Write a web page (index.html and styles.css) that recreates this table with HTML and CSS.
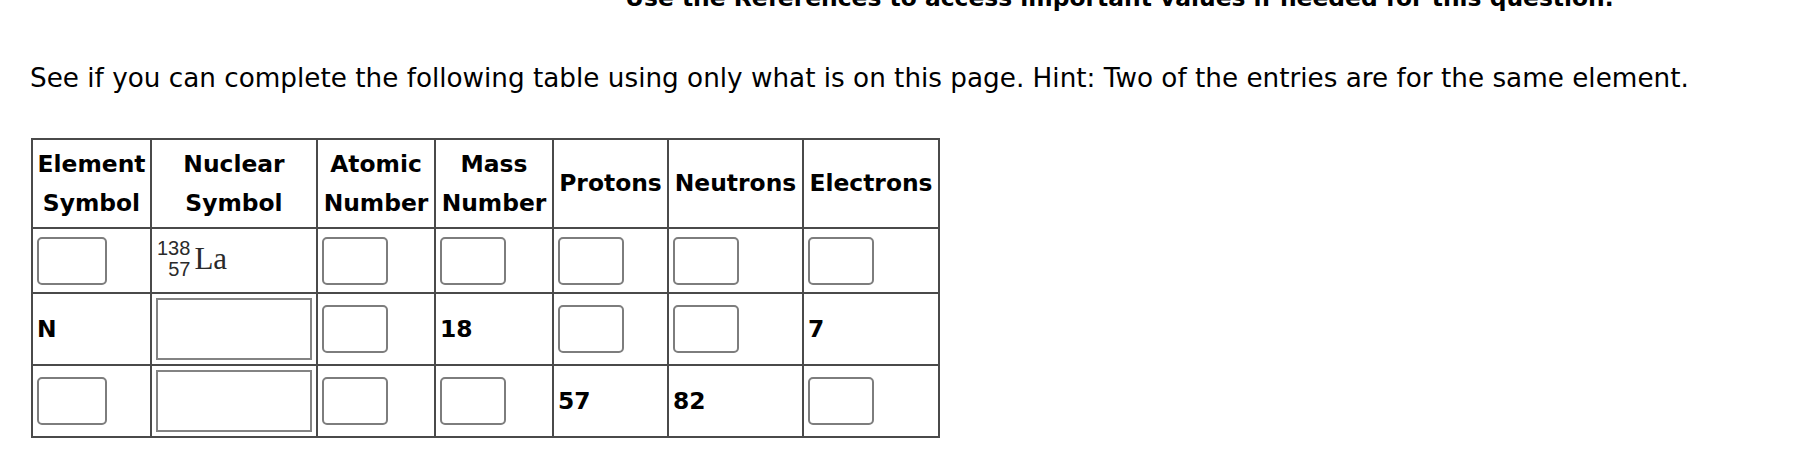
FILE: index.html
```html
<!DOCTYPE html>
<html lang="en">
<head>
<meta charset="utf-8">
<title>Complete the table</title>
<link rel="stylesheet" href="styles.css">
</head>
<body>
<div class="page">
  <p class="refs">Use the References to access important values if needed for this question.</p>
  <p class="intro">See if you can complete the following table using only what is on this page. Hint: Two of the entries are for the same element.</p>
  <table class="grid">
    <thead>
      <tr class="row-head">
        <th class="w1">Element<br>Symbol</th>
        <th class="w2">Nuclear<br>Symbol</th>
        <th class="w3">Atomic<br>Number</th>
        <th class="w4">Mass<br>Number</th>
        <th class="w5">Protons</th>
        <th class="w6">Neutrons</th>
        <th class="w7">Electrons</th>
      </tr>
    </thead>
    <tbody>
      <tr class="row-1">
        <td><input class="box box-wide" type="text"></td>
        <td class="nuc-cell">
          <span class="nuc">
            <span class="idx"><span>138</span><span>57</span></span>
            <span class="sym">La</span>
          </span>
        </td>
        <td><input class="box" type="text"></td>
        <td><input class="box" type="text"></td>
        <td><input class="box" type="text"></td>
        <td><input class="box" type="text"></td>
        <td><input class="box" type="text"></td>
      </tr>
      <tr class="row-2">
        <td class="val">N</td>
        <td><input class="nbox" type="text"></td>
        <td><input class="box" type="text"></td>
        <td class="val">18</td>
        <td><input class="box" type="text"></td>
        <td><input class="box" type="text"></td>
        <td class="val">7</td>
      </tr>
      <tr class="row-3">
        <td><input class="box box-wide" type="text"></td>
        <td><input class="nbox" type="text"></td>
        <td><input class="box" type="text"></td>
        <td><input class="box" type="text"></td>
        <td class="val">57</td>
        <td class="val">82</td>
        <td><input class="box" type="text"></td>
      </tr>
    </tbody>
  </table>
</div>
</body>
</html>
```

FILE: styles.css
```css
html, body {
  margin: 0;
  padding: 0;
  background: #ffffff;
}

body {
  color: #000000;
  font-family: "DejaVu Sans", Verdana, sans-serif;
}

.page {
  padding-left: 30px;
}

.refs {
  margin: -16px 0 0 0;
  padding-left: 595px;
  font-weight: bold;
  font-size: 23.4px;
  white-space: nowrap;
}

.intro {
  margin: 51px 0 0 0;
  font-size: 26.25px;
  white-space: nowrap;
}

.grid {
  margin: 45px 0 0 1px;
  table-layout: fixed;
  width: 909px;
  border-collapse: separate;
  border-spacing: 0;
  border: 1px solid #4a4a4a;
}

.grid th,
.grid td {
  box-sizing: border-box;
  border: 1px solid #4a4a4a;
  padding: 4px;
  font-weight: bold;
  font-size: 23.4px;
  vertical-align: middle;
}

.grid th {
  text-align: center;
  line-height: 38.4px;
  white-space: nowrap;
}

.grid td {
  text-align: left;
  line-height: 1.2;
}

.w1 { width: 119px; }
.w2 { width: 166px; }
.w3 { width: 118px; }
.w4 { width: 118px; }
.w5 { width: 115px; }
.w6 { width: 135px; }
.w7 { width: 136px; }

.row-head { height: 89px; }
.row-1 { height: 65px; }
.row-2 { height: 72px; }
.row-3 { height: 71px; }

.box {
  display: block;
  box-sizing: border-box;
  width: 66px;
  height: 48px;
  margin: 0;
  padding: 0;
  border: 2px solid #7d7d7d;
  border-radius: 5px;
  background: #ffffff;
}

.box-wide {
  width: 70px;
}

.nbox {
  display: block;
  box-sizing: border-box;
  width: 156px;
  height: 62px;
  margin: 0;
  padding: 0;
  border: 2px solid #838383;
  border-radius: 0;
  background: #ffffff;
}

.grid td.nuc-cell {
  vertical-align: top;
}

.nuc {
  display: inline-flex;
  align-items: flex-start;
  margin: 0 0 0 1px;
  color: #2a2a2a;
  font-weight: normal;
}

.idx {
  display: flex;
  flex-direction: column;
  align-items: flex-end;
  font-family: "Liberation Sans", Arial, sans-serif;
  font-size: 20px;
  line-height: 21px;
}

.sym {
  margin: 5px 0 0 4px;
  font-family: "Liberation Serif", "Times New Roman", serif;
  font-size: 31px;
  line-height: 31px;
}
```
